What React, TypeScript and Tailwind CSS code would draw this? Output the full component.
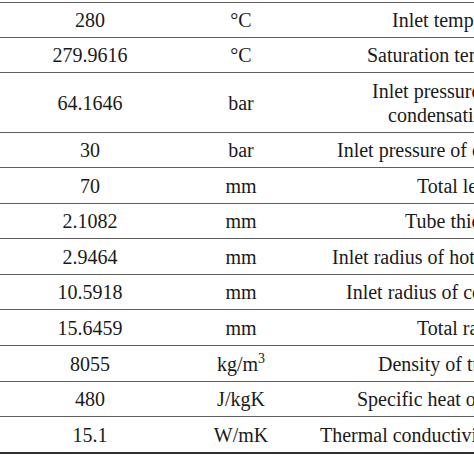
import React from "react";

type Row = {
  value: string;
  unit: React.ReactNode;
  desc: string[];
  pads: string[];
  h: string;
  last?: boolean;
};

const rows: Row[] = [
  { value: "280", unit: "°C", desc: ["Inlet temperature of hot fluid"], pads: ["pl-[90px]"], h: "h-[35px]" },
  { value: "279.9616", unit: "°C", desc: ["Saturation temperature"], pads: ["pl-[65px]"], h: "h-[35px]" },
  {
    value: "64.1646",
    unit: "bar",
    desc: ["Inlet pressure of hot fluid in", "condensation chamber"],
    pads: ["pl-[70px]", "pl-[86px]"],
    h: "h-[60px]",
  },
  { value: "30", unit: "bar", desc: ["Inlet pressure of cold fluid"], pads: ["pl-[35px]"], h: "h-[35px]" },
  { value: "70", unit: "mm", desc: ["Total length"], pads: ["pl-[115px]"], h: "h-[36px]" },
  { value: "2.1082", unit: "mm", desc: ["Tube thickness"], pads: ["pl-[103px]"], h: "h-[35px]" },
  { value: "2.9464", unit: "mm", desc: ["Inlet radius of hot fluid"], pads: ["pl-[30px]"], h: "h-[36px]" },
  { value: "10.5918", unit: "mm", desc: ["Inlet radius of cold fluid"], pads: ["pl-[44px]"], h: "h-[35px]" },
  { value: "15.6459", unit: "mm", desc: ["Total radius"], pads: ["pl-[115px]"], h: "h-[36px]" },
  {
    value: "8055",
    unit: (
      <span>
        kg/m<sup className="text-[14px] relative -top-[8px]">3</sup>
      </span>
    ),
    desc: ["Density of tube"],
    pads: ["pl-[76px]"],
    h: "h-[36px]",
  },
  { value: "480", unit: "J/kgK", desc: ["Specific heat of tube"], pads: ["pl-[55px]"], h: "h-[35px]" },
  {
    value: "15.1",
    unit: "W/mK",
    desc: ["Thermal conductivity of tube"],
    pads: ["pl-[18px]"],
    h: "h-[37px]",
    last: true,
  },
];

export default function App() {
  return (
    <div
      className="w-[474px] h-[474px] overflow-hidden bg-white pt-[2px] text-[#1a1a1a] text-[20px]"
      style={{ fontFamily: '"Liberation Serif", "Times New Roman", serif' }}
    >
      <div className="w-[700px] border-t border-[#5e5e5e]">
        {rows.map((r, i) => (
          <div
            key={i}
            className={`grid grid-cols-[180px_122px_1fr] items-center ${r.h} ${
              r.last ? "border-b-2 border-[#2e2e2e]" : "border-b border-[#5e5e5e]"
            }`}
          >
            <div className="text-center leading-none">{r.value}</div>
            <div className="text-center leading-none">{r.unit}</div>
            <div className="whitespace-nowrap leading-[24px]">
              {r.desc.map((d, j) => (
                <div key={j} className={r.pads[j]}>
                  {d}
                </div>
              ))}
            </div>
          </div>
        ))}
      </div>
    </div>
  );
}
